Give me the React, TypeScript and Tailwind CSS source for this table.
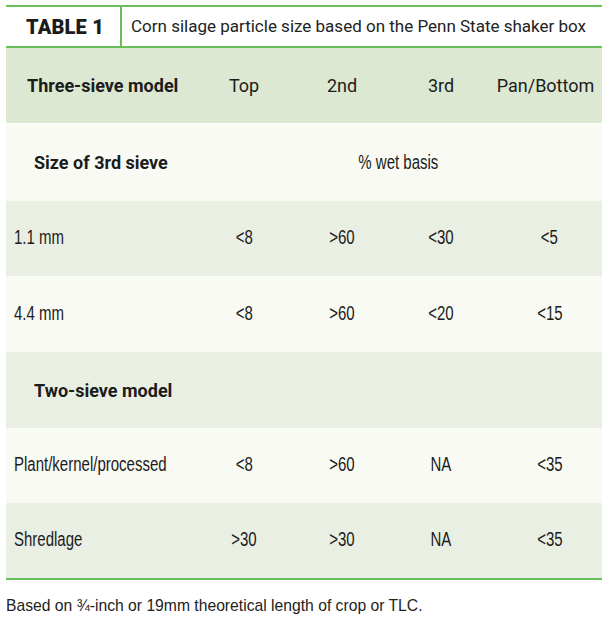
import React from "react";

const body = { fontFamily: '"Liberation Sans", Arial, sans-serif' };
const head = { fontFamily: 'Roboto, "Liberation Sans", sans-serif' };

type Row = { label: string; vals?: string[]; bold?: boolean; bg: string; h: string; span?: string };

const rows: Row[] = [
  { label: "Size of 3rd sieve", bold: true, bg: "bg-[#f8faf3]", h: "h-[77px]", span: "% wet basis" },
  { label: "1.1 mm", vals: ["<8", ">60", "<30", "<5"], bg: "bg-[#e9efe3]", h: "h-[75px]" },
  { label: "4.4 mm", vals: ["<8", ">60", "<20", "<15"], bg: "bg-[#f8faf3]", h: "h-[76px]" },
  { label: "Two-sieve model", bold: true, bg: "bg-[#e9efe3]", h: "h-[76px]" },
  { label: "Plant/kernel/processed", vals: ["<8", ">60", "NA", "<35"], bg: "bg-[#f8faf3]", h: "h-[75px]" },
  { label: "Shredlage", vals: [">30", ">30", "NA", "<35"], bg: "bg-[#e9efe3]", h: "h-[75px]" },
];

const cols = "grid grid-cols-[189px_98px_98px_100px_111px]";

export default function App() {
  return (
    <div className="w-[610px] h-[621px] bg-white text-[#1c1c1c]">
      <div className="ml-[6px] mt-[5px] w-[596px]">
        <div className="flex h-[43px] border-t-2 border-b-2 border-[#6abf5b]">
          <div className="w-[116px] flex items-center justify-center border-r-2 border-[#6abf5b]">
            <span style={head} className="text-[20px] font-black tracking-[0.2px] pl-[4px] pt-[1px]">TABLE 1</span>
          </div>
          <div className="flex items-center pl-[9px]">
            <span style={head} className="text-[17px] text-[#222]">Corn silage particle size based on the Penn State shaker box</span>
          </div>
        </div>
        <div className={`${cols} h-[76px] bg-[#dce8d1] items-center border-b border-white`} style={head}>
          <div className="pl-[21px] text-[18px] font-bold whitespace-nowrap">Three-sieve model</div>
          <div className="text-center text-[18px]">Top</div>
          <div className="text-center text-[18px]">2nd</div>
          <div className="text-center text-[18px]">3rd</div>
          <div className="text-center text-[18px] pr-[2px] whitespace-nowrap">Pan/Bottom</div>
        </div>
        {rows.map((r, i) => (
          <div key={i} className={`${cols} ${r.h} ${r.bg} items-center`}>
            {r.bold ? (
              <div style={head} className="pl-[28px] text-[18px] font-bold whitespace-nowrap">{r.label}</div>
            ) : (
              <div style={body} className="pl-[8px] pb-[3px] text-[20px] whitespace-nowrap">
                <span className="inline-block scale-x-[0.75] origin-left">{r.label}</span>
              </div>
            )}
            {r.span && (
              <div style={body} className="col-span-4 pb-[2px] text-center text-[20px] whitespace-nowrap">
                <span className="inline-block scale-x-[0.75]">{r.span}</span>
              </div>
            )}
            {r.vals &&
              r.vals.map((v, j) => (
                <div key={j} style={body} className={`pb-[3px] text-center text-[20px] ${j === 3 ? "pl-[6px]" : ""}`}>
                  <span className="inline-block scale-x-[0.75]">{v}</span>
                </div>
              ))}
          </div>
        ))}
        <div className="h-[2px] bg-[#6abf5b]" />
        <div style={body} className="mt-[14px] text-[15.7px] text-[#222]">
          Based on ¾-inch or 19mm theoretical length of crop or TLC.
        </div>
      </div>
    </div>
  );
}
